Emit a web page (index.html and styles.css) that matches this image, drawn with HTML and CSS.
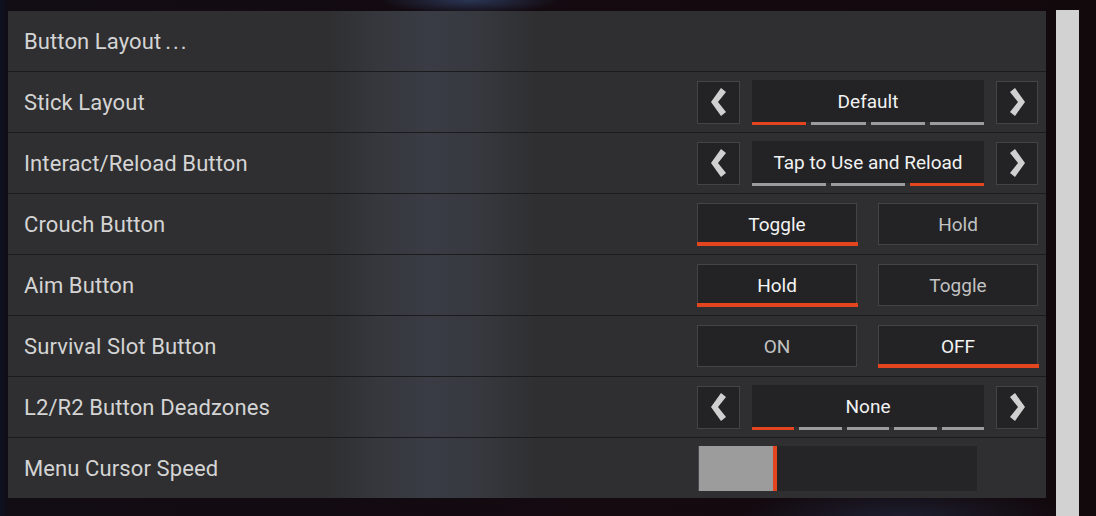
FILE: index.html
```html
<!DOCTYPE html>
<html>
<head>
    <title>Controller Settings</title>
    <link rel="stylesheet" href="styles.css">
</head>
<body>
    <div class="screen">
        <div class="panel">
            <div class="row">
                <span class="label">Button Layout<span class="dots">...</span></span>
            </div>

            <div class="row">
                <span class="label">Stick Layout</span>
                <div class="selector">
                    <div class="arrow"><svg viewBox="0 0 15 28"><polygon points="10,0 15,4 7,14 15,24 10,28 0,14"/></svg></div>
                    <div class="value">
                        <span class="value-text">Default</span>
                        <div class="steps">
                            <i class="on"></i><i></i><i></i><i></i>
                        </div>
                    </div>
                    <div class="arrow"><svg viewBox="0 0 15 28"><polygon points="5,0 0,4 8,14 0,24 5,28 15,14"/></svg></div>
                </div>
            </div>

            <div class="row">
                <span class="label">Interact/Reload Button</span>
                <div class="selector">
                    <div class="arrow"><svg viewBox="0 0 15 28"><polygon points="10,0 15,4 7,14 15,24 10,28 0,14"/></svg></div>
                    <div class="value">
                        <span class="value-text">Tap to Use and Reload</span>
                        <div class="steps">
                            <i></i><i></i><i class="on"></i>
                        </div>
                    </div>
                    <div class="arrow"><svg viewBox="0 0 15 28"><polygon points="5,0 0,4 8,14 0,24 5,28 15,14"/></svg></div>
                </div>
            </div>

            <div class="row">
                <span class="label">Crouch Button</span>
                <div class="toggle">
                    <div class="option selected">Toggle</div>
                    <div class="option">Hold</div>
                </div>
            </div>

            <div class="row">
                <span class="label">Aim Button</span>
                <div class="toggle">
                    <div class="option selected">Hold</div>
                    <div class="option">Toggle</div>
                </div>
            </div>

            <div class="row">
                <span class="label">Survival Slot Button</span>
                <div class="toggle">
                    <div class="option">ON</div>
                    <div class="option selected">OFF</div>
                </div>
            </div>

            <div class="row">
                <span class="label">L2/R2 Button Deadzones</span>
                <div class="selector">
                    <div class="arrow"><svg viewBox="0 0 15 28"><polygon points="10,0 15,4 7,14 15,24 10,28 0,14"/></svg></div>
                    <div class="value">
                        <span class="value-text">None</span>
                        <div class="steps">
                            <i class="on"></i><i></i><i></i><i></i><i></i>
                        </div>
                    </div>
                    <div class="arrow"><svg viewBox="0 0 15 28"><polygon points="5,0 0,4 8,14 0,24 5,28 15,14"/></svg></div>
                </div>
            </div>

            <div class="row">
                <span class="label">Menu Cursor Speed</span>
                <div class="slider-wrap">
                    <div class="slider">
                        <div class="slider-fill" style="width: 74px;"></div>
                        <div class="slider-handle"></div>
                    </div>
                </div>
            </div>
        </div>

        <div class="scrollbar"></div>
    </div>
</body>
</html>
```

FILE: styles.css
```css
body {
    margin: 0;
    padding: 0;
    font-family: Roboto, "Liberation Sans", sans-serif;
    background-color: #110b10;
    overflow: hidden;
}
.screen {
    width: 1096px;
    height: 516px;
    display: flex;
    align-items: flex-start;
    padding: 11px 0 0 8px;
    box-sizing: border-box;
    background:
        radial-gradient(ellipse 90px 14px at 470px 0, rgba(60, 90, 140, 0.55), transparent),
        radial-gradient(ellipse 160px 30px at 900px 516px, rgba(40, 55, 85, 0.45), transparent),
        linear-gradient(90deg, #0c1120 0, #120c14 8px, #140a10 600px, #12090d 1096px);
}
.panel {
    width: 1038px;
    background:
        linear-gradient(90deg,
            rgba(255, 255, 255, 0) 0,
            rgba(255, 255, 255, 0) 320px,
            rgba(120, 140, 185, 0.09) 370px,
            rgba(120, 140, 185, 0.14) 420px,
            rgba(120, 140, 185, 0.10) 470px,
            rgba(255, 255, 255, 0) 530px),
        #2f2f31;
}
.row {
    height: 60px;
    border-bottom: 1px solid #1b1b1d;
    display: flex;
    align-items: center;
    justify-content: space-between;
    padding: 0 8px 0 16px;
}
.row:last-child {
    border-bottom: none;
}
.label {
    color: #d4d4d4;
    font-size: 22px;
    letter-spacing: 0.1px;
}
.dots {
    margin-left: 4px;
    letter-spacing: 2px;
}

/* left/right selector with step bars */
.selector {
    width: 341px;
    display: grid;
    grid-template-columns: 43px 1fr 42px;
    column-gap: 12px;
    align-items: center;
}
.arrow {
    height: 43px;
    border: 1px solid #444446;
    background-color: #232325;
    display: flex;
    align-items: center;
    justify-content: center;
    box-sizing: border-box;
}
.arrow svg {
    width: 15px;
    height: 28px;
    fill: #d0d0d0;
}
.value {
    display: flex;
    flex-direction: column;
}
.value-text {
    height: 42px;
    line-height: 44px;
    background-color: #232325;
    color: #f2f2f2;
    font-size: 19px;
    text-align: center;
}
.steps {
    display: flex;
    gap: 5px;
}
.steps i {
    flex: 1;
    height: 3px;
    background-color: #9c9c9c;
}
.steps i.on {
    background-color: #e3461f;
}

/* two-option toggle */
.toggle {
    width: 341px;
    display: flex;
    gap: 21px;
}
.option {
    position: relative;
    flex: 1;
    height: 42px;
    line-height: 41px;
    box-sizing: border-box;
    border: 1px solid #444446;
    background-color: #232325;
    color: #c2c2c2;
    font-size: 19px;
    text-align: center;
}
.option.selected {
    color: #f4f4f4;
}
.option.selected::after {
    content: "";
    position: absolute;
    left: -1px;
    right: -2px;
    bottom: -2px;
    height: 4px;
    background-color: #e3461f;
}

/* cursor speed slider */
.slider-wrap {
    width: 341px;
    height: 60px;
    display: flex;
    align-items: center;
}
.slider {
    width: 278px;
    height: 45px;
    margin-left: 2px;
    display: flex;
    background-color: #252527;
    box-shadow: -1px 0 0 #4a4a4c;
}
.slider-fill {
    background-color: #9c9c9c;
}
.slider-handle {
    width: 4px;
    background-color: #e3461f;
}
.scrollbar {
    width: 23px;
    height: 506px;
    margin: -1px 0 0 10px;
    background-color: #d2d2d2;
}
```
